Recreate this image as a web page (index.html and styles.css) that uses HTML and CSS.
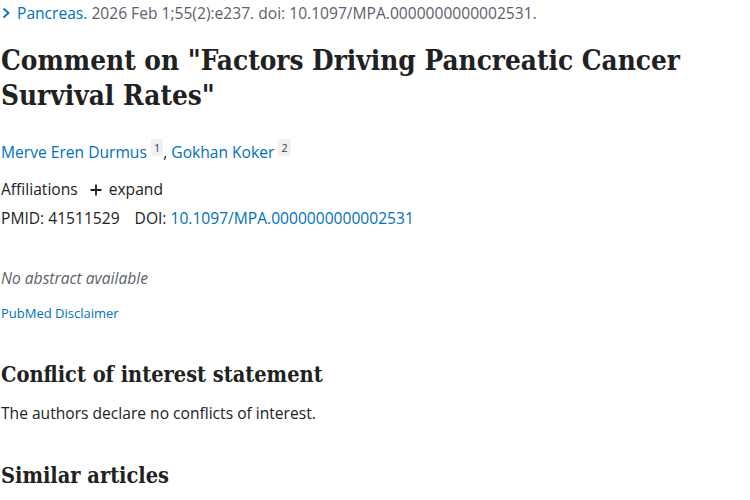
FILE: index.html
```html
<!DOCTYPE html>
<html lang="en">
<head>
<meta charset="utf-8">
<title>Comment on "Factors Driving Pancreatic Cancer Survival Rates"</title>
<link rel="stylesheet" href="styles.css">
</head>
<body>
<main class="article">
  <div class="citation">
    <svg class="chev" width="10" height="14" viewBox="0 0 10 14"><path d="M2.5 2.5 L7.5 7 L2.5 11.5" fill="none" stroke="#0071bc" stroke-width="1.8"/></svg>
    <a class="link journal" href="#">Pancreas.</a>
    <span class="cit">2026 Feb 1;55(2):e237. doi: 10.1097/MPA.0000000000002531.</span>
  </div>
  <h1 class="title">Comment on "Factors Driving Pancreatic Cancer Survival Rates"</h1>
  <div class="authors">
    <a class="link" href="#">Merve Eren Durmus</a> <sup class="aff-num">1</sup>, <a class="link" href="#">Gokhan Koker</a> <sup class="aff-num">2</sup>
  </div>
  <div class="affiliations">
    <span>Affiliations</span>
    <span class="expand"><svg class="plus" width="12" height="12" viewBox="0 0 12 12"><path d="M6 0.5 V11.5 M0.5 6 H11.5" stroke="#212121" stroke-width="1.8" fill="none"/></svg> expand</span>
  </div>
  <div class="ids">
    <span class="id">PMID: 41511529</span>
    <span class="id">DOI: <a class="link" href="#">10.1097/MPA.0000000000002531</a></span>
  </div>
  <p class="no-abstract">No abstract available</p>
  <a class="link disclaimer" href="#">PubMed Disclaimer</a>
  <section class="section">
    <h2 class="heading">Conflict of interest statement</h2>
    <p class="text">The authors declare no conflicts of interest.</p>
  </section>
  <section class="section">
    <h2 class="heading">Similar articles</h2>
  </section>
</main>
</body>
</html>
```
FILE: styles.css
```css
html, body {
  margin: 0;
  padding: 0;
  background: #ffffff;
}
body {
  font-family: "Open Sans", "Noto Sans", sans-serif;
  color: #212121;
}
.article {
  padding: 3px 0 0 1px;
}
.link {
  color: #0071bc;
  text-decoration: none;
}
.citation {
  display: flex;
  align-items: center;
  gap: 6px;
  font-size: 15.6px;
  line-height: 20px;
  color: #5b616b;
}
.chev {
  flex: none;
}
.cit {
  margin-left: -2px;
}
.title {
  font-family: "DejaVu Serif", serif;
  font-stretch: condensed;
  font-weight: bold;
  font-size: 27.7px;
  line-height: 35px;
  margin: 20px 0 0 0;
  color: #212121;
}
.authors {
  margin-top: 28px;
  font-size: 15.6px;
  line-height: 22px;
}
.aff-num {
  font-size: 11px;
  background: #f1f1f1;
  padding: 1px 3px;
  color: #444;
  vertical-align: 6px;
  line-height: 1;
}
.affiliations {
  margin-top: 15px;
  font-size: 15.6px;
  line-height: 22px;
  display: flex;
  gap: 12px;
}
.expand {
  display: inline-flex;
  align-items: center;
  gap: 7px;
}
.plus {
  flex: none;
  margin-top: 1px;
}
.ids {
  margin-top: 7px;
  font-size: 15.6px;
  line-height: 22px;
  display: flex;
  gap: 15px;
}
.no-abstract {
  margin: 38px 0 0 0;
  font-size: 15.6px;
  line-height: 22px;
  font-style: italic;
  color: #5b616b;
}
.disclaimer {
  display: block;
  margin-top: 14px;
  font-size: 13px;
  line-height: 20px;
}
.section {
  margin-top: 38px;
}
.section + .section {
  margin-top: 38px;
}
.heading {
  font-family: "DejaVu Serif", serif;
  font-stretch: condensed;
  font-weight: bold;
  font-size: 21.6px;
  line-height: 28px;
  margin: 0;
}
.text {
  margin: 13px 0 0 0;
  font-size: 15.6px;
  line-height: 22px;
}
```
